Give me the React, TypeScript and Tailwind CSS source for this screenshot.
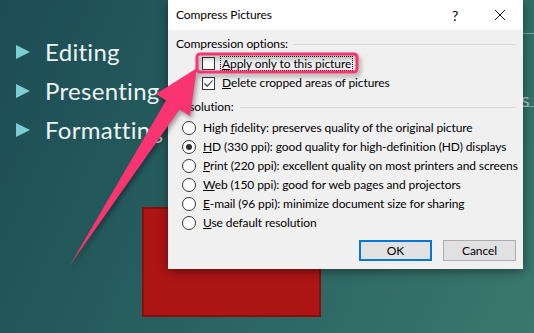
import React from "react";

const UI = "font-['Lato','Noto_Sans',sans-serif]";

function Check({ checked }: { checked?: boolean }) {
  return (
    <span className="w-[13px] h-[13px] border border-[#333] bg-white flex items-center justify-center shrink-0">
      {checked && (
        <svg width="11" height="11" viewBox="0 0 11 11">
          <path d="M1.5 5.5 L4.2 8.2 L9.5 2.5" fill="none" stroke="#333" strokeWidth="1.1" />
        </svg>
      )}
    </span>
  );
}

function Radio({ on }: { on?: boolean }) {
  return (
    <span className="w-[14px] h-[14px] rounded-full border border-[#333] bg-white flex items-center justify-center shrink-0">
      {on && <span className="w-[6px] h-[6px] rounded-full bg-[#333]" />}
    </span>
  );
}

const radios: { key: string; rest: string; on?: boolean; pre?: string }[] = [
  { pre: "High ", key: "f", rest: "idelity: preserves quality of the original picture" },
  { key: "H", rest: "D (330 ppi): good quality for high-definition (HD) displays", on: true },
  { key: "P", rest: "rint (220 ppi): excellent quality on most printers and screens" },
  { key: "W", rest: "eb (150 ppi): good for web pages and projectors" },
  { key: "E", rest: "-mail (96 ppi): minimize document size for sharing" },
  { key: "U", rest: "se default resolution" },
];

export default function App() {
  return (
    <div className="relative w-[534px] h-[333px] overflow-hidden bg-[linear-gradient(115deg,#1c4c55_0%,#28605f_45%,#3a786f_100%)]">
      {/* slide content */}
      <div className="flex flex-col pt-[36px] pl-[16px] gap-[7px] font-['Lato','Noto_Sans',sans-serif] text-[24px] text-[#eef4f4]">
        {["Editing", "Presenting", "Formatting"].map((t) => (
          <div key={t} className="flex items-center h-[32px]">
            <svg width="14" height="14" viewBox="0 0 14 14" className="shrink-0">
              <path d="M0 0 L14 7 L0 14 Z" fill="#7ecdd3" />
            </svg>
            <span className="ml-[15px] tracking-[0.3px]">{t}</span>
          </div>
        ))}
      </div>
      <div className="absolute left-[523px] top-[33px] w-[12px] h-px bg-[#7fa8a6]" />
      <div className="absolute left-[523px] top-[106px] w-[12px] h-px bg-[#7fa8a6]" />
      <div className="absolute left-[521px] top-[84px] text-[20px] text-[#a9c7c6] font-['Lato',sans-serif]">s</div>

      {/* red shape */}
      <div className="absolute left-[142px] top-[207px] w-[179px] h-[110px] bg-[#ad1515] border-2 border-[#8a0e0e]" />

      {/* dialog */}
      <div className={`absolute left-[168px] top-0 w-[355px] h-[269px] flex flex-col shadow-[0_2px_10px_rgba(0,0,0,0.45)] text-[12px] tracking-[-0.1px] text-black whitespace-nowrap ${UI}`}>
        <div className="h-[30px] bg-white flex items-center pl-[8px]">
          <span className="flex-1">Compress Pictures</span>
          <span className="w-[20px] text-center text-[14px] mr-[12px]">?</span>
          <span className="w-[46px] flex justify-center">
            <svg width="12" height="12" viewBox="0 0 12 12">
              <path d="M1 1 L11 11 M11 1 L1 11" stroke="#111" strokeWidth="1" />
            </svg>
          </span>
        </div>
        <div className="flex-1 bg-[#f0f0f0] flex flex-col pl-[8px] pr-[7px] pt-[6px]">
          <div className="flex items-center h-[16px] gap-[6px]">
            <span>Compression options:</span>
            <span className="flex-1 h-px bg-[#d8d8d8]" />
          </div>
          <div className="flex items-center h-[20px] mt-[1px] pl-[26px] gap-[5px]">
            <Check />
            <span className="border border-dotted border-black px-px leading-[13px]">
              <u>A</u>pply only to this picture
            </span>
          </div>
          <div className="flex items-center h-[20px] pl-[26px] gap-[5px]">
            <Check checked />
            <span className="px-[2px]">
              <u>D</u>elete cropped areas of pictures
            </span>
          </div>
          <div className="flex items-center h-[16px] mt-[6px] gap-[6px]">
            <span>Resolution:</span>
            <span className="flex-1 h-px bg-[#d8d8d8]" />
          </div>
          <div className="flex flex-col mt-[3px]">
            {radios.map((r, i) => (
              <div key={i} className="flex items-center h-[19px] pl-[6px] gap-[7px]">
                <Radio on={r.on} />
                <span>
                  {r.pre}
                  <u>{r.key}</u>
                  {r.rest}
                </span>
              </div>
            ))}
          </div>
          <div className="flex justify-end gap-[11px] mt-[8px]">
            <button className="w-[73px] h-[21px] bg-[#e1e1e1] border-2 border-[#0078d7] flex items-center justify-center">OK</button>
            <button className="w-[73px] h-[21px] bg-[#e1e1e1] border border-[#adadad] flex items-center justify-center">Cancel</button>
          </div>
        </div>
      </div>

      {/* annotation overlay */}
      <svg className="absolute left-0 top-0 drop-shadow-[2px_3px_2px_rgba(0,0,0,0.35)]" width="534" height="333" viewBox="0 0 534 333">
        <rect x="197" y="54" width="160" height="18" rx="3" fill="none" stroke="#fa3471" strokeWidth="3" />
        <path d="M197 68 L190 116 L179.5 109.5 L70 265 L166 100.5 L156 94 Z" fill="#fa3471" />
      </svg>
    </div>
  );
}
